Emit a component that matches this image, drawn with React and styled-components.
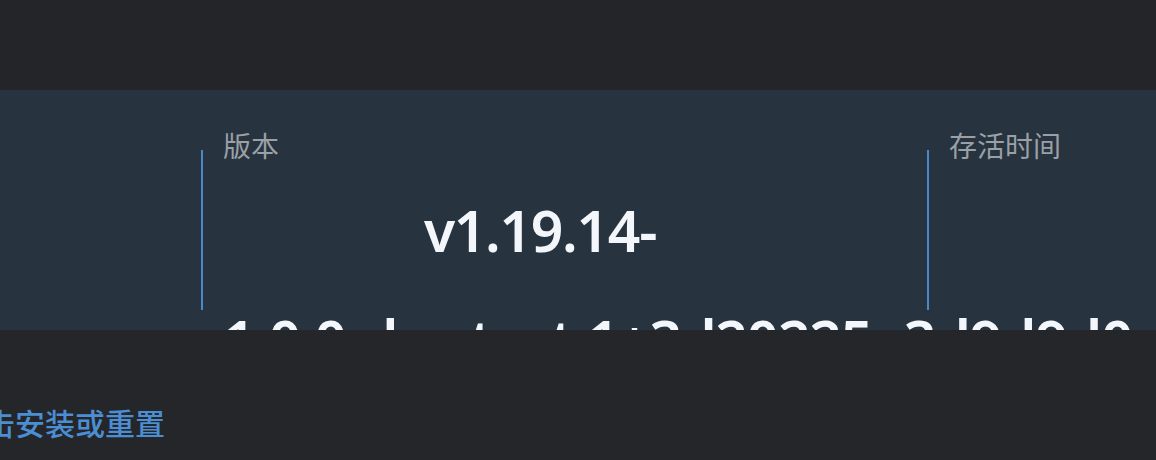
import React from "react";
import styled, { createGlobalStyle } from "styled-components";

const GlobalStyle = createGlobalStyle`
    html, body {
        margin: 0;
        padding: 0;
        background: #232528;
        overflow: hidden;
    }
    body {
        font-family: "Noto Sans", "Noto Sans CJK SC", sans-serif;
    }
`;

const Page = styled.div`
    width: 1156px;
    height: 460px;
    overflow: hidden;
    display: flex;
    flex-direction: column;
    background: #232528;
`;

const TopArea = styled.div`
    height: 90px;
    flex-shrink: 0;
`;

const StatsCard = styled.div`
    height: 240px;
    flex-shrink: 0;
    overflow: hidden;
    background: #27333f;
`;

const StatsGrid = styled.div`
    display: grid;
    grid-template-columns: 201px repeat(2, 726px);
`;

const Stat = styled.div`
    position: relative;
    padding: 35px 70px 0 22px;
    min-width: 0;
    &::before {
        content: "";
        position: absolute;
        left: 0;
        top: 60px;
        width: 2px;
        height: 160px;
        background: #4a88cc;
    }
`;

const StatLabel = styled.div`
    font-family: "Noto Sans CJK SC", "Noto Sans", sans-serif;
    font-size: 28px;
    line-height: 40px;
    color: #9aa0a6;
`;

const StatValue = styled.div`
    margin-top: 10px;
    font-family: "Noto Sans", "Noto Sans CJK SC", sans-serif;
    font-size: 57px;
    font-weight: 600;
    letter-spacing: -1.3px;
    line-height: 110px;
    color: #f3f6fb;
    text-align: center;
`;

const NoWrap = styled.span`
    white-space: nowrap;
`;

const Footer = styled.div`
    flex: 1;
    background: #25262a;
    padding-top: 72px;
`;

const InstallLink = styled.a`
    display: block;
    margin-left: -45px;
    font-family: "Noto Sans CJK SC", "Noto Sans", sans-serif;
    font-size: 30px;
    font-weight: 500;
    line-height: 40px;
    color: #4b8ed3;
    text-decoration: none;
    cursor: pointer;
`;

const stats = [
    { label: "版本", value: "v1.19.14-", rest: "1.0.0-dev.test.1+3d20225e3d9d9d0a" },
    { label: "存活时间", value: "" },
];

const App = () => {
    return (
        <>
            <GlobalStyle />
            <Page>
                <TopArea />
                <StatsCard>
                    <StatsGrid>
                        <div />
                        {stats.map((s) => (
                            <Stat key={s.label}>
                                <StatLabel>{s.label}</StatLabel>
                                <StatValue>
                                    {s.value}
                                    {s.rest && (
                                        <>
                                            <wbr />
                                            <NoWrap>{s.rest}</NoWrap>
                                        </>
                                    )}
                                </StatValue>
                            </Stat>
                        ))}
                    </StatsGrid>
                </StatsCard>
                <Footer>
                    <InstallLink>点击安装或重置</InstallLink>
                </Footer>
            </Page>
        </>
    );
};

export default App;
